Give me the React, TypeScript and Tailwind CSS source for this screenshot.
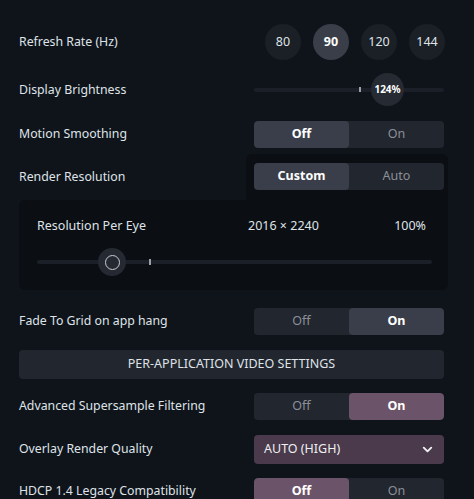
import { ChevronDown } from 'lucide-react';

const font = { fontFamily: '"Noto Sans", "Open Sans", sans-serif' };

function Label({ children }: { children: React.ReactNode }) {
  return <span className="text-[12.3px] leading-[18px] text-[#dfe3e8]">{children}</span>;
}

function Toggle({
  left,
  right,
  selected,
  accent = false,
}: {
  left: string;
  right: string;
  selected: 0 | 1;
  accent?: boolean;
}) {
  const on = accent ? 'bg-[#6b5469] text-white font-bold' : 'bg-[#3a3e4a] text-white font-bold';
  const off = 'text-[#8a8f98]';
  return (
    <div className="flex h-[27px] w-[190px] overflow-hidden rounded-[4px] bg-[#22262e] text-[12.5px]">
      <div className={`flex flex-1 items-center justify-center rounded-[4px] ${selected === 0 ? on : off}`}>
        {left}
      </div>
      <div className={`flex flex-1 items-center justify-center rounded-[4px] ${selected === 1 ? on : off}`}>
        {right}
      </div>
    </div>
  );
}

function Row({ label, h, children }: { label: string; h: string; children: React.ReactNode }) {
  return (
    <div className={`flex items-center justify-between pr-[30px] ${h}`}>
      <Label>{label}</Label>
      {children}
    </div>
  );
}

export default function App() {
  const rates = ['80', '90', '120', '144'];
  return (
    <div className="h-[499px] w-[474px] overflow-hidden bg-[#0f141b] pl-[19px] pt-[18px]" style={font}>
      <Row label="Refresh Rate (Hz)" h="h-[48px]">
        <div className="mr-[-1px] flex gap-[12px]">
          {rates.map((r) => (
            <div
              key={r}
              className={`flex h-[36px] w-[36px] items-center justify-center rounded-full text-[12.5px] ${
                r === '90' ? 'bg-[#3a3e49] font-bold text-white' : 'bg-[#1b1f26] text-[#dfe3e8]'
              }`}
            >
              {r}
            </div>
          ))}
        </div>
      </Row>

      <Row label="Display Brightness" h="h-[48px]">
        <div className="relative flex h-[34px] w-[190px] items-center">
          <div className="h-[4px] w-full rounded-full bg-[#1b2028]" />
          <div className="absolute left-[105px] top-[14px] h-[5px] w-[2px] bg-[#9aa0a8]" />
          <div className="absolute left-[117px] top-0 flex h-[33px] w-[33px] items-center justify-center rounded-full bg-[#262a32] text-[10px] font-bold text-white">
            124%
          </div>
        </div>
      </Row>

      <Row label="Motion Smoothing" h="h-[40px]">
        <Toggle left="Off" right="On" selected={0} />
      </Row>

      <div className="flex h-[46px] items-center justify-between pr-[26px]">
        <Label>Render Resolution</Label>
        <div className="flex w-[202px] items-start self-stretch rounded-t-[6px] bg-[#0b0e13] pl-[8px] pt-[9px]">
          <Toggle left="Custom" right="Auto" selected={0} />
        </div>
      </div>

      <div className="mr-[26px] h-[90px] rounded-b-[6px] rounded-tl-[6px] bg-[#0b0e13] px-[18px]">
        <div className="flex h-[52px] items-center pr-[4px] text-[12.5px] text-[#dfe3e8]">
          <span className="w-[211px]">Resolution Per Eye</span>
          <span>2016 × 2240</span>
          <span className="ml-auto">100%</span>
        </div>
        <div className="relative -mt-[4px] flex h-[28px] w-[395px] items-center">
          <div className="h-[4px] w-full rounded-full bg-[#1b2028]" />
          <div className="absolute left-[112px] top-[11px] h-[6px] w-[2px] bg-[#9aa0a8]" />
          <div className="absolute left-[61px] top-0 flex h-[28px] w-[28px] items-center justify-center rounded-full bg-[#252a32]">
            <div className="h-[15px] w-[15px] rounded-full border-[1.5px] border-[#c9ccd1]" />
          </div>
        </div>
      </div>

      <div className="mt-[10px]">
        <Row label="Fade To Grid on app hang" h="h-[42px]">
          <Toggle left="Off" right="On" selected={1} />
        </Row>
      </div>

      <div className="mr-[30px] mt-[8px] flex h-[29px] items-center justify-center rounded-[4px] bg-[#22262e] text-[12.5px] text-[#dfe3e8]">
        PER-APPLICATION VIDEO SETTINGS
      </div>

      <div className="mt-[6px]">
        <Row label="Advanced Supersample Filtering" h="h-[42px]">
          <Toggle left="Off" right="On" selected={1} accent />
        </Row>
      </div>

      <Row label="Overlay Render Quality" h="h-[44px]">
        <div className="flex h-[29px] w-[190px] items-center justify-between rounded-[4px] bg-[#4a3a4b] pl-[10px] pr-[9px] text-[12.5px] text-[#eef0f2]">
          <span>AUTO (HIGH)</span>
          <ChevronDown size={15} strokeWidth={3} />
        </div>
      </Row>

      <div className="flex items-start justify-between pr-[30px] pt-[7px]">
        <div className="-mt-[1px]">
          <Label>HDCP 1.4 Legacy Compatibility</Label>
        </div>
        <Toggle left="Off" right="On" selected={0} accent />
      </div>
    </div>
  );
}
